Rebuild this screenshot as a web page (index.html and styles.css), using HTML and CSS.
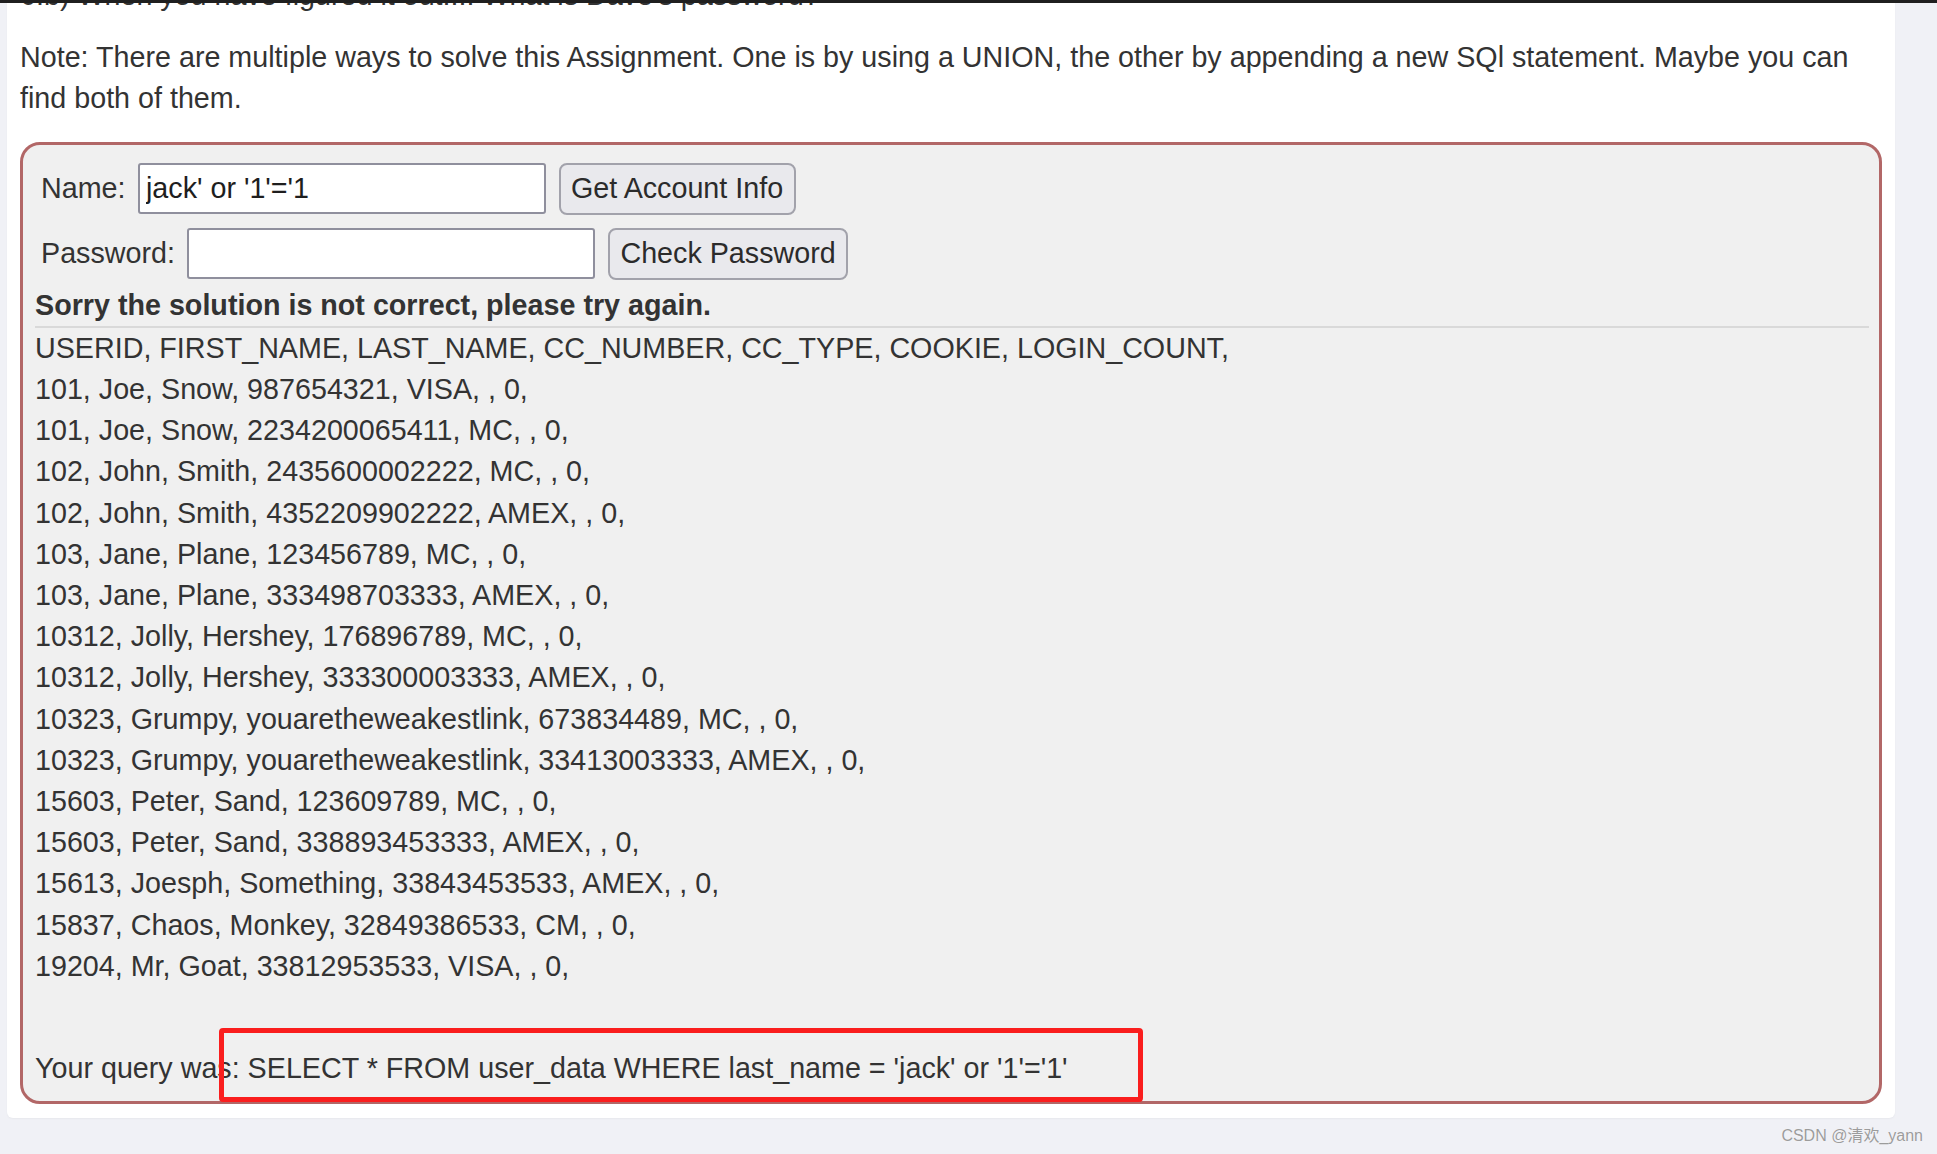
FILE: index.html
```html
<!DOCTYPE html>
<html lang="en">
<head>
<meta charset="utf-8">
<title>SQL Injection (advanced)</title>
<link rel="stylesheet" href="styles.css">
</head>
<body>
<div class="topbar"></div>
<div class="panel">
  <p class="cut">6.b) When you have figured it out.... What is Dave's password?</p>
  <p class="note">Note: There are multiple ways to solve this Assignment. One is by using a UNION, the other by appending a new SQl statement. Maybe you can find both of them.</p>
  <div class="assignment">
    <form class="form">
      <div class="row row-first">
        <label class="label">Name:</label>
        <input class="field" type="text" value="jack' or '1'='1">
        <button class="btn" type="button">Get Account Info</button>
      </div>
      <div class="row row-second">
        <label class="label">Password:</label>
        <input class="field" type="password" value="">
        <button class="btn" type="button">Check Password</button>
      </div>
    </form>
    <div class="feedback">Sorry the solution is not correct, please try again.</div>
    <div class="output">
      <div class="line">USERID, FIRST_NAME, LAST_NAME, CC_NUMBER, CC_TYPE, COOKIE, LOGIN_COUNT,</div>
      <div class="line">101, Joe, Snow, 987654321, VISA, , 0,</div>
      <div class="line">101, Joe, Snow, 2234200065411, MC, , 0,</div>
      <div class="line">102, John, Smith, 2435600002222, MC, , 0,</div>
      <div class="line">102, John, Smith, 4352209902222, AMEX, , 0,</div>
      <div class="line">103, Jane, Plane, 123456789, MC, , 0,</div>
      <div class="line">103, Jane, Plane, 333498703333, AMEX, , 0,</div>
      <div class="line">10312, Jolly, Hershey, 176896789, MC, , 0,</div>
      <div class="line">10312, Jolly, Hershey, 333300003333, AMEX, , 0,</div>
      <div class="line">10323, Grumpy, youaretheweakestlink, 673834489, MC, , 0,</div>
      <div class="line">10323, Grumpy, youaretheweakestlink, 33413003333, AMEX, , 0,</div>
      <div class="line">15603, Peter, Sand, 123609789, MC, , 0,</div>
      <div class="line">15603, Peter, Sand, 338893453333, AMEX, , 0,</div>
      <div class="line">15613, Joesph, Something, 33843453533, AMEX, , 0,</div>
      <div class="line">15837, Chaos, Monkey, 32849386533, CM, , 0,</div>
      <div class="line">19204, Mr, Goat, 33812953533, VISA, , 0,</div>
      <p class="query">Your query was: SELECT * FROM user_data WHERE last_name = 'jack' or '1'='1'</p>
    </div>
  </div>
</div>
<div class="watermark">CSDN @清欢_yann</div>
<div class="annot"></div>
</body>
</html>
```
FILE: styles.css
```css
html, body {
  margin: 0;
  padding: 0;
}
body {
  background: #f0f1f6;
  font-family: "Liberation Sans", Arial, "Noto Sans CJK SC", sans-serif;
  font-size: 28.7px;
  line-height: 41.2px;
  color: #333;
  width: 1937px;
  height: 1154px;
  overflow: hidden;
}
.topbar {
  position: fixed;
  top: 0;
  left: 0;
  right: 0;
  height: 3px;
  background: #1f1f1f;
  z-index: 5;
}
.panel {
  margin-left: 7px;
  width: 1888px;
  box-sizing: border-box;
  background: #fff;
  padding: 0 13px 14px 13px;
  border-radius: 0 0 6px 6px;
  box-shadow: 0 1px 2px rgba(0, 0, 0, 0.04);
}
.panel::before {
  content: "";
  display: table;
}
.cut {
  margin: -25px 0 20.5px 0;
}
.note {
  margin: 0;
}
.assignment {
  margin-top: 22.5px;
  border: 3px solid #b26767;
  border-radius: 20px;
  background: #f0f0f0;
  padding: 12px 10px 12px 12px;
}
.form {
  margin: 0;
}
.row {
  display: flex;
  align-items: center;
  gap: 12.5px;
  padding-left: 6px;
  height: 52px;
}
.row-first {
  margin-top: 6px;
}
.row-second {
  margin-top: 13px;
}
.label {
  font-size: 28.7px;
  color: #333;
}
.field {
  box-sizing: border-box;
  width: 408px;
  height: 51px;
  margin: 0;
  padding: 0 6px;
  border: 2px solid #8f8f9d;
  border-radius: 3px;
  background: #fff;
  font-family: "Liberation Sans", Arial, sans-serif;
  font-size: 28.7px;
  color: #1e1e1e;
  outline: none;
}
.btn {
  box-sizing: border-box;
  height: 52px;
  margin: 0;
  padding: 0 10.5px;
  border: 2px solid #a2a2ab;
  border-radius: 8px;
  background: #e9e9ed;
  font-family: "Liberation Sans", Arial, sans-serif;
  font-size: 28.7px;
  color: #2b2b2b;
}
.feedback {
  margin-top: 5px;
  font-weight: bold;
  border-bottom: 2px solid #d9d9d9;
  padding-bottom: 0;
}
.output {
  margin: 0;
}
.line {
  white-space: pre;
}
.query {
  margin: 61px 0 0 0;
}
.watermark {
  margin-top: 8px;
  padding-right: 14px;
  text-align: right;
  font-size: 16px;
  line-height: 20px;
  color: #9c9c9c;
  text-shadow: 0 0 1px #fff;
}
.annot {
  position: absolute;
  left: 219px;
  top: 1028px;
  width: 924px;
  height: 74px;
  box-sizing: border-box;
  border: 5px solid #fa1e1e;
  border-radius: 4px;
  z-index: 4;
}
```
